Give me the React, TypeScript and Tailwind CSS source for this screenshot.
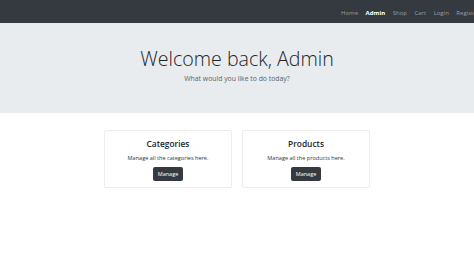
import React from "react";

export default function App() {
  const links = ["Home", "Admin", "Shop", "Cart", "Login", "Register"];
  return (
    <div className="w-[474px] h-[266px] overflow-hidden bg-white font-['Open_Sans',sans-serif] text-[#212529]">
      <nav className="h-[23px] bg-[#343a40] flex items-center justify-end overflow-hidden">
        <div className="flex items-center gap-[7.5px] text-[6px] leading-[8px] whitespace-nowrap translate-x-[5px] translate-y-[0.5px]">
          {links.map((l) => (
            <span key={l} className={l === "Admin" ? "text-white font-bold" : "text-[#9a9da0]"}>
              {l}
            </span>
          ))}
        </div>
      </nav>
      <header className="h-[90px] bg-[#e9ecef] flex flex-col items-center pt-[23px]">
        <h1 className="text-[19.6px] font-light leading-[26px] text-[#212529]">Welcome back, Admin</h1>
        <p className="text-[6.85px] text-[#5a5f64] leading-[10px] mt-[2px]">What would you like to do today?</p>
      </header>
      <main className="flex justify-center gap-[10px] pt-[17px]">
        {["Categories", "Products"].map((t) => (
          <div key={t} className="w-[128px] h-[58px] border border-[#ededed] rounded-[2px] flex flex-col items-center pt-[7px]">
            <div className="text-[8.4px] font-semibold leading-[12px]">{t}</div>
            <div className="text-[5.55px] leading-[8px] mt-[4px] text-[#303438]">
              Manage all the {t.toLowerCase()} here.
            </div>
            <button className="mt-[5px] h-[14px] px-[4.5px] bg-[#343a40] text-white text-[5.5px] rounded-[2px] leading-[14px]">
              Manage
            </button>
          </div>
        ))}
      </main>
    </div>
  );
}
